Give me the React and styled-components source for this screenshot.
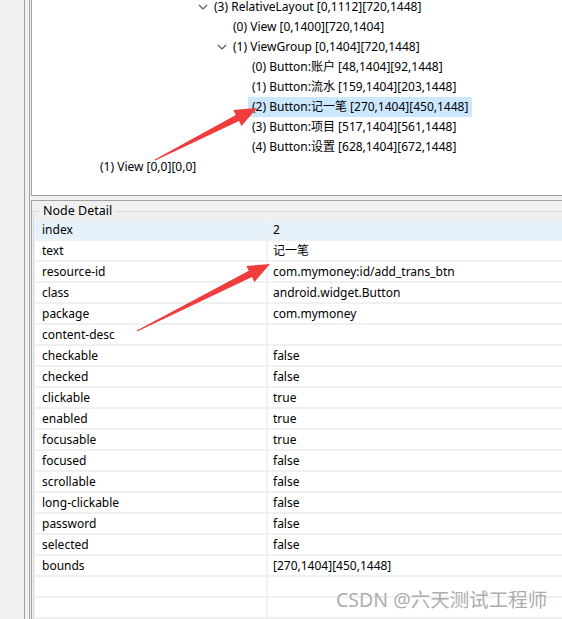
import styled, { createGlobalStyle } from 'styled-components';

const GlobalStyle = createGlobalStyle`
  html, body {
    margin: 0;
    padding: 0;
    background: #f0f0f0;
    overflow: hidden;
  }
  body {
    font-family: "Noto Sans", "Noto Sans CJK SC", sans-serif;
    font-size: 12px;
    color: #000;
  }
`;

const Page = styled.div`
  position: relative;
  width: 562px;
  height: 619px;
  overflow: hidden;
  padding-left: 24px;
  box-sizing: border-box;
`;

const Frame = styled.div`
  height: 100%;
  border-left: 1px solid #a0a0a0;
  padding-left: 4px;
`;

const Inner = styled.div`
  height: 100%;
  border-left: 1px solid #a0a0a0;
  padding-left: 1px;
  display: flex;
  flex-direction: column;
  gap: 4px;
`;

const TreePane = styled.div`
  height: 195px;
  flex-shrink: 0;
  background: #fff;
  border-left: 1px solid #a0a0a0;
  border-bottom: 1px solid #a0a0a0;
  overflow: hidden;
`;

const TreeList = styled.div`
  margin-top: -3px;
  display: flex;
  flex-direction: column;
`;

const TreeRow = styled.div`
  display: flex;
  align-items: center;
  height: 20px;
  padding-left: ${(p) => 49 + p.depth * 19}px;
  white-space: nowrap;
`;

const Toggle = styled.span`
  width: 19px;
  display: flex;
  justify-content: flex-start;
  padding-left: 3px;
  box-sizing: border-box;
`;

const Label = styled.span`
  height: 20px;
  line-height: 20px;
  padding: 0 4px;
  margin-left: -4px;
  background: ${(p) => (p.selected ? '#cce8ff' : 'transparent')};
`;

const DetailPane = styled.div`
  flex: 1;
  border-left: 1px solid #a0a0a0;
  border-top: 1px solid #a0a0a0;
  padding: 10px 0 0 1px;
`;

const Group = styled.div`
  position: relative;
  height: 100%;
  border-left: 1px solid #dcdcdc;
  border-top: 1px solid #dcdcdc;
  padding: 8px 0 0 1px;
`;

const Legend = styled.span`
  position: absolute;
  top: -9px;
  left: 6px;
  padding: 0 3px;
  background: #f0f0f0;
  font-size: 12.5px;
  line-height: 16px;
`;

const Table = styled.div`
  background: #fff;
  height: 100%;
  display: flex;
  flex-direction: column;
`;

const Row = styled.div`
  display: grid;
  grid-template-columns: 231px 1fr;
  height: 21px;
  flex-shrink: 0;
  box-sizing: border-box;
  border-bottom: 2px solid #f0f0f0;
  background: ${(p) => (p.active ? '#e5f1fb' : '#fff')};
`;

const Cell = styled.div`
  padding-left: ${(p) => (p.value ? 5 : 7)}px;
  line-height: 20px;
  white-space: nowrap;
  border-left: ${(p) => (p.value ? '2px solid #f0f0f0' : 'none')};
`;

const Overlay = styled.svg`
  position: absolute;
  left: 0;
  top: 0;
  pointer-events: none;
`;

const Watermark = styled.div`
  position: absolute;
  left: 336px;
  top: 587px;
  font-family: "Noto Sans", "Noto Sans CJK SC", sans-serif;
  font-size: 19.5px;
  line-height: 26px;
  color: #adadad;
  white-space: nowrap;
  text-shadow: 0 0 2px rgba(255, 255, 255, 0.9);
`;

function Chevron() {
  return (
    <svg width="10" height="6" viewBox="0 0 10 6">
      <path d="M1 1 L5 5 L9 1" fill="none" stroke="#555" strokeWidth="1.2" />
    </svg>
  );
}

const tree = [
  { depth: 6, open: true, text: '(3) RelativeLayout [0,1112][720,1448]' },
  { depth: 7, text: '(0) View [0,1400][720,1404]' },
  { depth: 7, open: true, text: '(1) ViewGroup [0,1404][720,1448]' },
  { depth: 8, text: '(0) Button:账户 [48,1404][92,1448]' },
  { depth: 8, text: '(1) Button:流水 [159,1404][203,1448]' },
  { depth: 8, selected: true, text: '(2) Button:记一笔 [270,1404][450,1448]' },
  { depth: 8, text: '(3) Button:项目 [517,1404][561,1448]' },
  { depth: 8, text: '(4) Button:设置 [628,1404][672,1448]' },
  { depth: 0, text: '(1) View [0,0][0,0]' },
];

const details = [
  ['index', '2'],
  ['text', '记一笔'],
  ['resource-id', 'com.mymoney:id/add_trans_btn'],
  ['class', 'android.widget.Button'],
  ['package', 'com.mymoney'],
  ['content-desc', ''],
  ['checkable', 'false'],
  ['checked', 'false'],
  ['clickable', 'true'],
  ['enabled', 'true'],
  ['focusable', 'true'],
  ['focused', 'false'],
  ['scrollable', 'false'],
  ['long-clickable', 'false'],
  ['password', 'false'],
  ['selected', 'false'],
  ['bounds', '[270,1404][450,1448]'],
  ['', ''],
  ['', ''],
  ['', ''],
];

export default function App() {
  return (
    <Page>
      <GlobalStyle />
      <Frame>
        <Inner>
          <TreePane>
            <TreeList>
              {tree.map((n, i) => (
                <TreeRow key={i} depth={n.depth}>
                  <Toggle>{n.open && <Chevron />}</Toggle>
                  <Label selected={n.selected}>{n.text}</Label>
                </TreeRow>
              ))}
            </TreeList>
          </TreePane>
          <DetailPane>
            <Group>
              <Legend>Node Detail</Legend>
              <Table>
                {details.map(([k, v], i) => (
                  <Row key={i} active={i === 0}>
                    <Cell>{k}</Cell>
                    <Cell value>{v}</Cell>
                  </Row>
                ))}
              </Table>
            </Group>
          </DetailPane>
        </Inner>
      </Frame>
      <Overlay width="562" height="619" viewBox="0 0 562 619">
        <polygon
          fill="#f03c3c"
          points="154.8,159.6 235.8,114.9 233.3,110 257,108 241.5,126 239,121.1 155.2,160.4"
        />
        <polygon
          fill="#f03c3c"
          points="136.8,330.6 248.8,270.8 246.4,265.9 270,264 254.4,281.9 252,277 137.2,331.4"
        />
      </Overlay>
      <Watermark>CSDN @六天测试工程师</Watermark>
    </Page>
  );
}
